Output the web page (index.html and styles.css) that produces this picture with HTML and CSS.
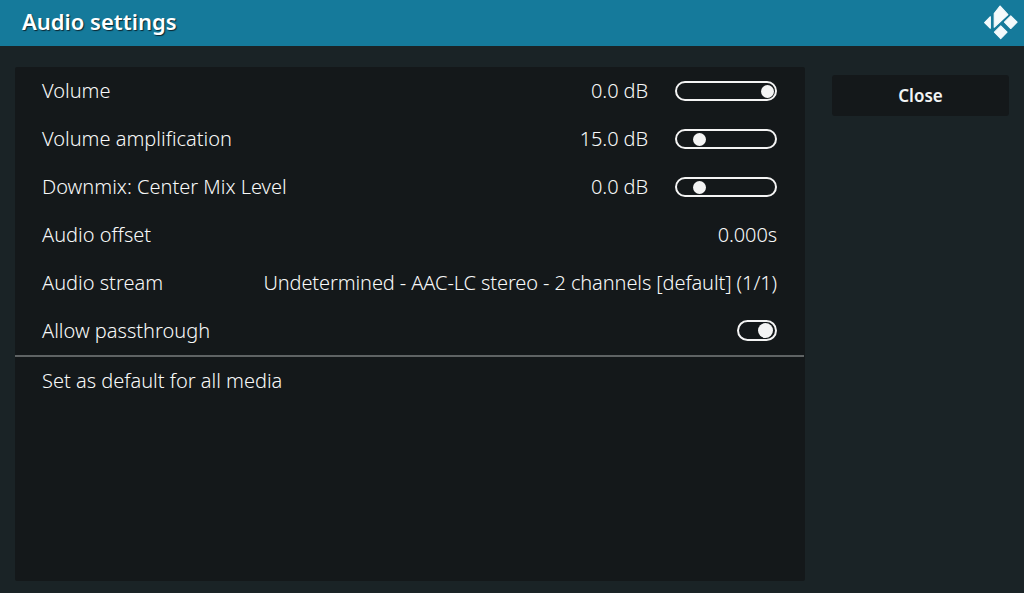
FILE: index.html
```html
<!DOCTYPE html>
<html lang="en">
<head>
    <meta charset="UTF-8">
    <meta name="viewport" content="width=device-width, initial-scale=1.0">
    <title>Audio settings</title>
    <link rel="stylesheet" href="styles.css">
</head>
<body>
    <header class="header">
        <h1>Audio settings</h1>
        <svg class="logo" viewBox="0 0 36 36" aria-label="Kodi logo">
            <path d="M1.5 18.5 7 13V24Z"/>
            <path d="M10.6 10 16.1 2.8 23.6 10.9 10.6 23Z"/>
            <path d="M26.3 12.2 32.3 18.2 26.3 24.2 20.3 18.2Z"/>
            <path d="M16.8 21.7 22.8 27.7 16.8 33.7 10.8 27.7Z"/>
        </svg>
    </header>
    <div class="main">
        <div class="panel">
            <div class="row">
                <span class="label">Volume</span>
                <span class="value">0.0 dB</span>
                <div class="slider end"><span class="knob"></span></div>
            </div>
            <div class="row">
                <span class="label">Volume amplification</span>
                <span class="value">15.0 dB</span>
                <div class="slider"><span class="knob"></span></div>
            </div>
            <div class="row">
                <span class="label">Downmix: Center Mix Level</span>
                <span class="value">0.0 dB</span>
                <div class="slider"><span class="knob"></span></div>
            </div>
            <div class="row">
                <span class="label">Audio offset</span>
                <span class="value">0.000s</span>
            </div>
            <div class="row">
                <span class="label">Audio stream</span>
                <span class="value">Undetermined - AAC-LC stereo - 2 channels [default] (1/1)</span>
            </div>
            <div class="row">
                <span class="label">Allow passthrough</span>
                <div class="toggle"><span class="knob"></span></div>
            </div>
            <div class="divider"></div>
            <div class="row">
                <span class="label">Set as default for all media</span>
            </div>
        </div>
        <aside class="side">
            <button class="close">Close</button>
        </aside>
    </div>
</body>
</html>
```
FILE: styles.css
```css
body {
    font-family: "Noto Sans", Arial, sans-serif;
    margin: 0;
    height: 593px;
    overflow: hidden;
    background-color: #1a2326;
    color: #f8f9f9;
}
.header {
    height: 46px;
    background-color: #157a9b;
    display: flex;
    align-items: center;
    justify-content: space-between;
    padding: 0 3px 0 22px;
}
.header h1 {
    margin: 0 0 5px;
    font-size: 22px;
    font-weight: 600;
    color: #fff;
    text-shadow: 1px 1px 1px #0b2630;
}
.logo {
    width: 38px;
    height: 38px;
    margin-bottom: 3px;
    fill: #f4fafc;
    stroke: #f4fafc;
    stroke-width: 1;
    stroke-linejoin: round;
}
.main {
    display: flex;
    align-items: flex-start;
    padding: 21px 15px 0;
}
.panel {
    width: 790px;
    height: 514px;
    background-color: #14181a;
    border-radius: 2px;
}
.row {
    height: 48px;
    display: flex;
    align-items: center;
    padding: 0 28px 0 27px;
    font-size: 20px;
    font-weight: 300;
}
.label {
    flex: 1;
    margin-bottom: 2px;
}
.value {
    margin-bottom: 2px;
    letter-spacing: -0.1px;
}
.slider {
    width: 82px;
    height: 16px;
    margin-left: 27px;
    border: 2px solid #f4f4f4;
    border-radius: 10px;
    display: flex;
    align-items: center;
    padding-left: 16px;
}
.slider.end {
    width: 97px;
    padding-left: 0;
    padding-right: 1px;
    justify-content: flex-end;
}
.slider .knob {
    width: 13px;
    height: 13px;
}
.toggle {
    width: 34px;
    height: 17px;
    margin-bottom: 1px;
    border: 2px solid #f4f4f4;
    border-radius: 11px;
    display: flex;
    align-items: center;
    justify-content: flex-end;
    padding-right: 2px;
}
.knob {
    display: block;
    width: 15px;
    height: 15px;
    border-radius: 50%;
    background-color: #f4f4f4;
}
.divider {
    height: 2px;
    margin-right: 1px;
    background-color: #5f6364;
}
.side {
    margin-left: 27px;
    padding-top: 8px;
}
.close {
    width: 177px;
    height: 41px;
    border: none;
    border-radius: 3px;
    background-color: #14181a;
    color: #f2f4f4;
    font-family: inherit;
    font-size: 17px;
    font-weight: 600;
}
```
